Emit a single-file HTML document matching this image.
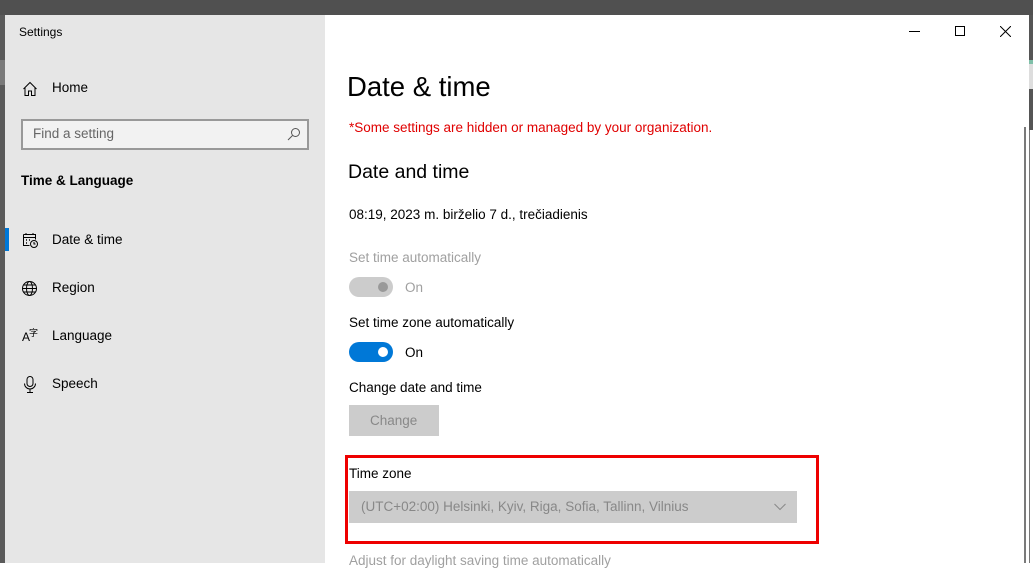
<!DOCTYPE html>
<html><head><meta charset="utf-8"><style>
*{margin:0;padding:0;box-sizing:border-box}
body{width:1033px;height:563px;overflow:hidden;background:#fff;position:relative;font-family:"Liberation Sans",sans-serif;color:#000}
.a{position:absolute;white-space:nowrap}
.t14{font-size:13.5px}
</style></head><body>
<div class="a" style="left:0;top:0;width:1033px;height:15px;background:#505050"></div>
<div class="a" style="left:0;top:15px;width:5px;height:548px;background:#5a5a5a"></div>
<div class="a" style="left:0;top:60px;width:5px;height:25px;background:#7a7a7a"></div>
<div class="a" style="left:1029px;top:15px;width:4px;height:115px;background:#555"></div>
<div class="a" style="left:1029px;top:60px;width:4px;height:4px;background:#7fbfa8"></div>
<div class="a" style="left:1029px;top:64px;width:4px;height:25px;background:#ddd"></div>
<div class="a" style="left:1029px;top:130px;width:1px;height:433px;background:#777"></div>
<div class="a" style="left:5px;top:15px;width:320px;height:548px;background:#e6e6e6"></div>
<div class="a" style="left:19px;top:25px;font-size:12px">Settings</div>
<svg class="a" style="left:22px;top:81px" width="16" height="16" viewBox="0 0 16 16" fill="none" stroke="#000" stroke-width="1"><path d="M1.5 8 8 1.5 14.5 8M3 6.5V14.5H6.5V10H9.5V14.5H13V6.5"/></svg>
<div class="a t14" style="left:52px;top:80px">Home</div>
<div class="a" style="left:21px;top:119px;width:288px;height:31px;border:2px solid #999;background:#f2f2f2"></div>
<div class="a t14" style="left:33px;top:126px;color:#666">Find a setting</div>
<svg class="a" style="left:287px;top:127px" width="14" height="14" viewBox="0 0 14 14" fill="none" stroke="#555"><circle cx="8.5" cy="5.5" r="4"/><path d="M5.5 8.5 1 13"/></svg>
<div class="a t14" style="left:21px;top:173px;font-weight:bold">Time &amp; Language</div>
<div class="a" style="left:5px;top:228px;width:4px;height:23px;background:#0078d7"></div>
<svg class="a" style="left:22px;top:232px" width="16" height="16" viewBox="0 0 16 16" fill="none" stroke="#000"><path d="M1.5 2.5h12v5M1.5 2.5v11h6M1.5 5.5h12M4 1v2M11 1v2"/><path d="M4 8h1M7 8h1M4 11h1" stroke-width="1.5"/><circle cx="12" cy="12" r="3.5"/><path d="M12 10v2h1.5"/></svg>
<div class="a t14" style="left:52px;top:232px">Date &amp; time</div>
<svg class="a" style="left:21px;top:280px" width="17" height="17" viewBox="0 0 17 17" fill="none" stroke="#000"><circle cx="8.5" cy="8.5" r="7"/><ellipse cx="8.5" cy="8.5" rx="3" ry="7"/><path d="M1.5 8.5h14M2.5 5h12M2.5 12h12"/></svg>
<div class="a t14" style="left:52px;top:280px">Region</div>
<div class="a" style="left:22px;top:330px;font-size:12px">A</div>
<div class="a" style="left:29px;top:326px;font-size:9px;font-family:'Noto Sans CJK SC',sans-serif">字</div>
<div class="a t14" style="left:52px;top:328px">Language</div>
<svg class="a" style="left:23px;top:376px" width="14" height="17" viewBox="0 0 14 17" fill="none" stroke="#000"><rect x="4" y="0.5" width="6" height="10" rx="3"/><path d="M1.5 7.5a5.5 5.5 0 0 0 11 0M7 13v3M4 16.5h6"/></svg>
<div class="a t14" style="left:52px;top:376px">Speech</div>
<div class="a" style="left:909px;top:31px;width:11px;height:1px;background:#000"></div>
<div class="a" style="left:955px;top:26px;width:10px;height:10px;border:1px solid #000"></div>
<svg class="a" style="left:1000px;top:26px" width="11" height="11" viewBox="0 0 11 11" stroke="#000"><path d="M0 0 11 11M11 0 0 11"/></svg>
<div class="a" style="left:1024px;top:127px;width:2px;height:436px;background:#7a7a7a"></div>
<div class="a" style="left:347px;top:71px;font-size:27.5px">Date &amp; time</div>
<div class="a t14" style="left:349px;top:120px;color:#e00000">*Some settings are hidden or managed by your organization.</div>
<div class="a" style="left:348px;top:161px;font-size:19.5px">Date and time</div>
<div class="a t14" style="left:349px;top:207px">08:19, 2023 m. birželio 7 d., trečiadienis</div>
<div class="a t14" style="left:349px;top:250px;color:#a0a0a0">Set time automatically</div>
<div class="a" style="left:349px;top:277px;width:44px;height:20px;border-radius:10px;background:#ccc"></div>
<div class="a" style="left:378px;top:282px;width:10px;height:10px;border-radius:5px;background:#999"></div>
<div class="a t14" style="left:405px;top:280px;color:#a0a0a0">On</div>
<div class="a t14" style="left:349px;top:315px">Set time zone automatically</div>
<div class="a" style="left:349px;top:342px;width:44px;height:20px;border-radius:10px;background:#0078d7"></div>
<div class="a" style="left:378px;top:347px;width:10px;height:10px;border-radius:5px;background:#fff"></div>
<div class="a t14" style="left:405px;top:345px">On</div>
<div class="a t14" style="left:349px;top:380px">Change date and time</div>
<div class="a" style="left:349px;top:405px;width:90px;height:31px;background:#ccc"></div>
<div class="a t14" style="left:370px;top:413px;color:#888">Change</div>
<div class="a" style="left:345px;top:455px;width:474px;height:89px;border:3px solid #e00"></div>
<div class="a t14" style="left:349px;top:466px">Time zone</div>
<div class="a" style="left:349px;top:491px;width:448px;height:32px;background:#ccc"></div>
<div class="a t14" style="left:361px;top:499px;color:#888">(UTC+02:00) Helsinki, Kyiv, Riga, Sofia, Tallinn, Vilnius</div>
<svg class="a" style="left:774px;top:503px" width="12" height="8" viewBox="0 0 12 8" fill="none" stroke="#888"><path d="M0.5 1 6 6.5 11.5 1"/></svg>
<div class="a t14" style="left:349px;top:553px;color:#a0a0a0">Adjust for daylight saving time automatically</div>
</body></html>
